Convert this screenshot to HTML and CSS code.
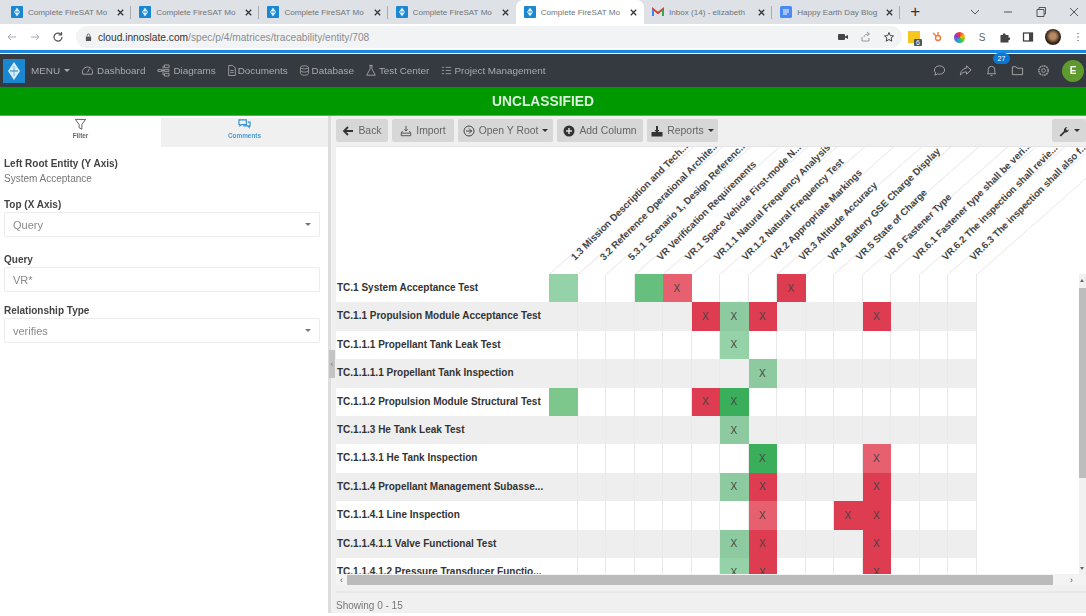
FILE: index.html
```html
<!DOCTYPE html>
<html lang="en">
<head>
  <meta charset="UTF-8" />
  <title>Complete FireSAT Model</title>
  <link rel="stylesheet" href="styles.css">
</head>
<body>

<svg class="defs" width="0" height="0">
  <symbol id="fav" viewBox="0 0 12 12">
    <rect width="12" height="12" rx="1" fill="#1a87d2"/>
    <path d="M6 1.5 9 6 6 10.5 3 6Z" fill="#dff0fb"/>
    <path d="M4 6h4" stroke="#1a87d2"/>
  </symbol>
  <symbol id="close" viewBox="0 0 10 10">
    <path d="M2 2l6 6M8 2l-6 6" stroke="#333" stroke-width="1.4" fill="none"/>
  </symbol>
</svg>

<!-- browser chrome -->
<div class="tabstrip">
  <div class="tab"><svg class="fav"><use href="#fav"/></svg><span>Complete FireSAT Mo</span><svg class="x"><use href="#close"/></svg></div>
  <div class="tab"><svg class="fav"><use href="#fav"/></svg><span>Complete FireSAT Mo</span><svg class="x"><use href="#close"/></svg></div>
  <div class="tab"><svg class="fav"><use href="#fav"/></svg><span>Complete FireSAT Mo</span><svg class="x"><use href="#close"/></svg></div>
  <div class="tab last"><svg class="fav"><use href="#fav"/></svg><span>Complete FireSAT Mo</span><svg class="x"><use href="#close"/></svg></div>
  <div class="tab active"><svg class="fav"><use href="#fav"/></svg><span>Complete FireSAT Mo</span><svg class="x"><use href="#close"/></svg></div>
  <div class="tab"><svg class="fav" viewBox="0 0 12 10"><path d="M1 9V2l5 4 5-4v7" fill="none" stroke="#d8402f" stroke-width="2"/><path d="M1 9V3" stroke="#4285f4" stroke-width="2"/><path d="M11 9V3" stroke="#34a853" stroke-width="2"/></svg><span>Inbox (14) - elizabeth</span><svg class="x"><use href="#close"/></svg></div>
  <div class="tab"><svg class="fav" viewBox="0 0 12 12"><rect width="12" height="12" rx="1.5" fill="#4a8af4"/><path d="M3 4h6M3 6h6M3 8h4" stroke="#fff"/></svg><span>Happy Earth Day Blog</span><svg class="x"><use href="#close"/></svg></div>
  <div class="newtab">+</div>
  <div class="winctl">
    <svg width="12" height="12" viewBox="0 0 12 12"><path d="M2 4l4 4 4-4" fill="none" stroke="#555"/></svg>
    <svg width="12" height="12" viewBox="0 0 12 12"><path d="M2 6h8" stroke="#555"/></svg>
    <svg width="12" height="12" viewBox="0 0 12 12"><path d="M2 3.500h7v7H2zM4 3.500V1.500h6.500V8H9" fill="none" stroke="#555"/></svg>
    <svg width="12" height="12" viewBox="0 0 12 12"><path d="M2 2l8 8M10 2l-8 8" stroke="#555"/></svg>
  </div>
</div>

<div class="addressbar">
  <svg class="chromeicon" viewBox="0 0 12 12"><path d="M10 6H2M5 3 2 6l3 3" fill="none" stroke="#aab"/></svg>
  <svg class="chromeicon" viewBox="0 0 12 12"><path d="M2 6h8M7 3l3 3-3 3" fill="none" stroke="#aab"/></svg>
  <svg class="chromeicon" viewBox="0 0 12 12"><path d="M10 6a4 4 0 1 1-1.200-2.800M9.500 1v3h-3" fill="none" stroke="#555" stroke-width="1.200"/></svg>
  <div class="omnibox">
    <svg class="lock" viewBox="0 0 8 10"><rect x="1" y="4" width="6" height="5" fill="#555"/><path d="M2.500 4V2.500a1.500 1.500 0 0 1 3 0V4" fill="none" stroke="#555"/></svg>
    <span class="url"><b>cloud.innoslate.com</b>/spec/p/4/matrices/traceability/entity/708</span>
    <div class="omni-right">
      <svg viewBox="0 0 12 12"><rect x="1" y="3" width="7" height="6" rx="1" fill="#444"/><path d="M8 5.500 11 4v4L8 6.500Z" fill="#444"/></svg>
      <svg viewBox="0 0 12 12"><path d="M2 6v4h7V7M4 6c0-2 2-3 5-3M7 1l2.500 2L7 5" fill="none" stroke="#999"/></svg>
      <svg viewBox="0 0 12 12"><path d="M6 1.500 7.300 4.600l3.200.3-2.400 2.100.7 3.200L6 8.500l-2.800 1.700.7-3.200L1.500 4.900l3.200-.3Z" fill="none" stroke="#444"/></svg>
    </div>
  </div>
  <div class="extensions">
    <div class="ext-note"><i>6</i></div>
    <svg viewBox="0 0 12 12"><circle cx="7" cy="7" r="2.500" fill="none" stroke="#f07a3c" stroke-width="1.400"/><path d="M5 5 2 2M7 4V1" stroke="#f07a3c" stroke-width="1.400"/></svg>
    <div class="ext-wheel"></div>
    <span class="ext-s">S</span>
    <svg viewBox="0 0 12 12"><path d="M1.500 4h2.500a1.300 1.300 0 1 1 2.500 0h3v2.500a1.300 1.300 0 1 1 0 2.500V11.500H1.500Z" fill="#444"/></svg>
    <svg viewBox="0 0 12 12"><rect x="1.500" y="2" width="9" height="8" fill="none" stroke="#444" stroke-width="1.300"/><rect x="7" y="2" width="3.500" height="8" fill="#444"/></svg>
    <div class="ext-avatar"></div>
    <svg viewBox="0 0 12 12"><path d="M6 2v.8M6 5.600v.8M6 9.200v.8" stroke="#666" stroke-width="1.600"/></svg>
  </div>
</div>

<!-- app nav -->
<nav class="topnav">
  <div class="logo"><svg width="16" height="20" viewBox="0 0 16 20"><path d="M8 1 14 10 8 19 2 10Z" fill="#d9ecf8"/><path d="M4 10h8" stroke="#1b87d0"/><path d="M8 5v10" stroke="#1b87d0" stroke-width=".6"/></svg></div>
  <a class="menu">MENU <i class="caret"></i></a>
  <a class="nav-dash"><svg viewBox="0 0 14 14"><path d="M2 11a5.500 5.500 0 1 1 10 0Z" fill="none" stroke="#aaa"/><path d="M7 9l2-4" stroke="#aaa"/></svg>Dashboard</a>
  <a class="nav-diag"><svg viewBox="0 0 14 14"><path d="M1 6h4v2H1zM8 1h5v3H8zM8 6h5v2H8zM8 10h5v3H8zM5 7h3M6.500 2.500V11.500M6.500 2.500H8M6.500 11.500H8" fill="none" stroke="#aaa" stroke-width=".9"/></svg>Diagrams</a>
  <a class="nav-docs"><svg viewBox="0 0 12 14"><path d="M2 1h5l3 3v9H2Z M4 7h4M4 9.500h4" fill="none" stroke="#aaa"/></svg>Documents</a>
  <a class="nav-data"><svg viewBox="0 0 14 14"><ellipse cx="7" cy="3" rx="5" ry="2" fill="none" stroke="#aaa"/><path d="M2 3v8c0 1 2 2 5 2s5-1 5-2V3M2 7c0 1 2 2 5 2s5-1 5-2" fill="none" stroke="#aaa"/></svg>Database</a>
  <a class="nav-test"><svg viewBox="0 0 14 14"><path d="M5 1h4M6 1v4L2 12.500h10L8 5V1" fill="none" stroke="#aaa"/></svg>Test Center</a>
  <a class="nav-pm"><svg viewBox="0 0 14 14"><path d="M1 3h3M1 7h3M1 11h3M6 3h7M6 7h7M6 11h7" stroke="#aaa"/></svg>Project Management</a>
  <div class="nav-right">
    <svg viewBox="0 0 14 14"><path d="M7 2c3 0 5.500 2 5.500 4.500S10 11 7 11c-.7 0-1.500-.1-2-.3L2 12l.8-2.500C1.900 8.700 1.500 7.600 1.500 6.500 1.500 4 4 2 7 2Z" fill="none" stroke="#aaa"/></svg>
    <svg viewBox="0 0 14 14"><path d="M8 2l5 4.500L8 11V8.500C5 8.500 3 9.500 1.500 12c0-4 2.500-7 6.500-7.500Z" fill="none" stroke="#aaa"/></svg>
    <div class="bell"><svg viewBox="0 0 14 14"><path d="M2.500 10.500h9L10.500 9V6a3.500 3.500 0 0 0-7 0v3ZM6 12.500h2" fill="none" stroke="#aaa"/></svg><span class="badge">27</span></div>
    <svg viewBox="0 0 14 14"><path d="M1.500 3h4l1 1.500h6V11.500h-11Z" fill="none" stroke="#aaa"/></svg>
    <svg viewBox="0 0 14 14"><circle cx="7" cy="7" r="2" fill="none" stroke="#aaa"/><circle cx="7" cy="7" r="5" fill="none" stroke="#aaa" stroke-width="1.400" stroke-dasharray="2 .6"/></svg>
    <div class="avatar">E</div>
  </div>
</nav>

<div class="banner">UNCLASSIFIED</div>

<div class="workspace">
  <!-- left panel -->
  <aside class="sidebar">
    <div class="side-tabs">
      <div class="side-tab on">
        <svg viewBox="0 0 14 14"><path d="M1.500 1.500h11L8.500 7v5l-3-1.500V7Z" fill="none" stroke="#555"/></svg>
        Filter
      </div>
      <div class="side-tab blue">
        <svg viewBox="0 0 14 14"><path d="M1 2h8v5H4L2 8.500V7H1ZM5.500 8.500H10.500L12 10V8.500h1V4.500H10.500" fill="none" stroke="#2e8fd6" stroke-width="1.200"/></svg>
        Comments
      </div>
    </div>
    <form class="filter-form">
      <label>Left Root Entity (Y Axis)</label>
      <p>System Acceptance</p>
      <label class="top-label">Top (X Axis)</label>
      <div class="field">Query<i class="caret"></i></div>
      <label class="query-label">Query</label>
      <div class="field">VR*</div>
      <label class="rel-label">Relationship Type</label>
      <div class="field">verifies<i class="caret"></i></div>
    </form>
  </aside>

  <div class="resizer"><span>‹</span></div>

  <!-- matrix -->
  <main class="content">
    <div class="toolbar">
      <button class="w-back"><svg viewBox="0 0 12 12"><path d="M11 6H2M6 2 2 6l4 4" fill="none" stroke="#333" stroke-width="1.800"/></svg>Back</button>
      <button class="w-import"><svg viewBox="0 0 14 14"><path d="M7 1v6M5 5l2 2 2-2M3 7 1.500 9.500v3h11v-3L11 7M1.500 9.500h11" fill="none" stroke="#444"/></svg>Import</button>
      <button class="w-open"><svg viewBox="0 0 12 12"><circle cx="6" cy="6" r="5" fill="none" stroke="#444"/><path d="M3 6h6M6 3.500 8.500 6 6 8.500" fill="none" stroke="#444"/></svg>Open Y Root <i class="caret"></i></button>
      <button class="w-add"><svg viewBox="0 0 12 12"><circle cx="6" cy="6" r="5.500" fill="#333"/><path d="M3 6h6M6 3v6" stroke="#ddd" stroke-width="1.500"/></svg>Add Column</button>
      <button class="w-reports"><svg viewBox="0 0 12 12"><path d="M6 1v5M1.500 8h9v2.500h-9Z" stroke="#333" stroke-width="2" fill="#333"/><path d="M3.500 5 6 8l2.500-3Z" fill="#333"/></svg>Reports <i class="caret"></i></button>
      <button class="w-wrench"><svg viewBox="0 0 12 12"><path d="M1.500 10.500 6 6c-.5-2 1-4 3.500-4L8 3.500 8.500 5l1.500.5L11 4c0 2.500-2 4-4 3.500l-4 4Z" fill="#333"/></svg><i class="caret"></i></button>
    </div>

    <div class="matrix">
      <div class="row head">
        <div></div>
        <div class="col"><span>1.3 Mission Description and Tech...</span></div>
        <div class="col"><span>3.2 Reference Operational Archite...</span></div>
        <div class="col"><span>5.3.1 Scenario 1, Design Referenc...</span></div>
        <div class="col"><span>VR Verification Requirements</span></div>
        <div class="col"><span>VR.1 Space Vehicle First-mode N...</span></div>
        <div class="col"><span>VR.1.1 Natural Frequency Analysis</span></div>
        <div class="col"><span>VR.1.2 Natural Frequency Test</span></div>
        <div class="col"><span>VR.2 Appropriate Markings</span></div>
        <div class="col"><span>VR.3 Altitude Accuracy</span></div>
        <div class="col"><span>VR.4 Battery GSE Charge Display</span></div>
        <div class="col"><span>VR.5 State of Charge</span></div>
        <div class="col"><span>VR.6 Fastener Type</span></div>
        <div class="col"><span>VR.6.1 Fastener type shall be veri...</span></div>
        <div class="col"><span>VR.6.2 The inspection shall revie...</span></div>
        <div class="col"><span>VR.6.3 The inspection shall also f...</span></div>
      </div>

      <div class="row">
        <div class="name">TC.1 System Acceptance Test</div>
        <div class="g1"></div><div></div><div></div><div class="g2"></div><div class="r1">X</div><div></div><div></div><div></div><div class="r2">X</div><div></div><div></div><div></div><div></div><div></div><div></div>
      </div>
      <div class="row">
        <div class="name">TC.1.1 Propulsion Module Acceptance Test</div>
        <div></div><div></div><div></div><div></div><div></div><div class="r2">X</div><div class="g1">X</div><div class="r2">X</div><div></div><div></div><div></div><div class="r2">X</div><div></div><div></div><div></div>
      </div>
      <div class="row">
        <div class="name">TC.1.1.1 Propellant Tank Leak Test</div>
        <div></div><div></div><div></div><div></div><div></div><div></div><div class="g1">X</div><div></div><div></div><div></div><div></div><div></div><div></div><div></div><div></div>
      </div>
      <div class="row">
        <div class="name">TC.1.1.1.1 Propellant Tank Inspection</div>
        <div></div><div></div><div></div><div></div><div></div><div></div><div></div><div class="g1">X</div><div></div><div></div><div></div><div></div><div></div><div></div><div></div>
      </div>
      <div class="row">
        <div class="name">TC.1.1.2 Propulsion Module Structural Test</div>
        <div class="g1b"></div><div></div><div></div><div></div><div></div><div class="r2">X</div><div class="g3">X</div><div></div><div></div><div></div><div></div><div></div><div></div><div></div><div></div>
      </div>
      <div class="row">
        <div class="name">TC.1.1.3 He Tank Leak Test</div>
        <div></div><div></div><div></div><div></div><div></div><div></div><div class="g1">X</div><div></div><div></div><div></div><div></div><div></div><div></div><div></div><div></div>
      </div>
      <div class="row">
        <div class="name">TC.1.1.3.1 He Tank Inspection</div>
        <div></div><div></div><div></div><div></div><div></div><div></div><div></div><div class="g3">X</div><div></div><div></div><div></div><div class="r1">X</div><div></div><div></div><div></div>
      </div>
      <div class="row">
        <div class="name">TC.1.1.4 Propellant Management Subasse...</div>
        <div></div><div></div><div></div><div></div><div></div><div></div><div class="g1">X</div><div class="r2">X</div><div></div><div></div><div></div><div class="r2">X</div><div></div><div></div><div></div>
      </div>
      <div class="row">
        <div class="name">TC.1.1.4.1 Line Inspection</div>
        <div></div><div></div><div></div><div></div><div></div><div></div><div></div><div class="r1">X</div><div></div><div></div><div class="r2">X</div><div class="r2">X</div><div></div><div></div><div></div>
      </div>
      <div class="row">
        <div class="name">TC.1.1.4.1.1 Valve Functional Test</div>
        <div></div><div></div><div></div><div></div><div></div><div></div><div class="g1">X</div><div class="r2">X</div><div></div><div></div><div></div><div class="r2">X</div><div></div><div></div><div></div>
      </div>
      <div class="row">
        <div class="name">TC.1.1.4.1.2 Pressure Transducer Functio...</div>
        <div></div><div></div><div></div><div></div><div></div><div></div><div class="g1">X</div><div class="r2">X</div><div></div><div></div><div></div><div class="r2">X</div><div></div><div></div><div></div>
      </div>

      <div class="vscroll"><i></i></div>
    </div>

    <div class="hscroll"><em>‹</em><i></i><em>›</em></div>
    <div class="footer">Showing 0 - 15</div>
  </main>
</div>

</body>
</html>
```

FILE: styles.css
```css
html, body { margin: 0; height: 100%; overflow: hidden; }
body {
  font-family: "Liberation Sans", Arial, sans-serif;
  background: #fff;
  color: #333;
  filter: blur(0.6px);
}
.defs { position: absolute; }
.caret {
  display: inline-block;
  border-top: 3px solid currentColor;
  border-left: 3px solid transparent;
  border-right: 3px solid transparent;
  vertical-align: middle;
}

/* browser chrome */
.tabstrip {
  height: 24px;
  background: #dee1e6;
  display: flex;
  align-items: center;
  padding-left: 3px;
  font-size: 8.1px;
  color: #70747a;
}
.tab {
  width: 128.2px;
  height: 24px;
  box-sizing: border-box;
  padding: 0 6px 0 8px;
  display: flex;
  align-items: center;
  position: relative;
  flex: none;
}
.tab::after {
  content: "";
  position: absolute;
  right: 0;
  top: 6px;
  height: 13px;
  border-right: 1px solid #a8abb0;
}
.tab.last::after, .tab.active::after { display: none; }
.tab.active { background: #fff; border-radius: 7px 7px 0 0; }
.tab span { flex: 1; overflow: hidden; white-space: nowrap; margin-left: 5px; }
.fav { width: 12px; height: 12px; flex: none; }
.x { width: 9px; height: 9px; flex: none; margin-left: 4px; }
.newtab { margin-left: 10px; font-size: 17px; color: #333; line-height: 24px; }
.winctl { margin-left: auto; display: flex; gap: 21px; padding-right: 6px; }

.addressbar {
  height: 26px;
  background: #fff;
  display: flex;
  align-items: center;
  padding-left: 6px;
  border-bottom: 3px solid #1a87e0;
  box-sizing: content-box;
}
.chromeicon { width: 12px; height: 12px; margin-right: 11px; flex: none; }
.omnibox {
  margin-left: 1px;
  width: 826px;
  height: 22px;
  background: #f1f3f4;
  border-radius: 11px;
  display: flex;
  align-items: center;
  padding-left: 9px;
  box-sizing: border-box;
  font-size: 10.2px;
}
.lock { width: 7px; height: 9px; margin-right: 6px; }
.url { color: #8a8d91; }
.url b { font-weight: normal; color: #333; }
.omni-right { margin-left: auto; display: flex; gap: 11px; padding-right: 7px; }
.omni-right svg { width: 12px; height: 12px; }
.extensions { display: flex; align-items: center; gap: 11px; margin-left: 6px; }
.extensions > svg { width: 12px; height: 12px; }
.ext-note { width: 12px; height: 12px; background: #f6c81e; position: relative; }
.ext-note i {
  position: absolute;
  right: -2px;
  bottom: -3px;
  background: #555;
  color: #fff;
  font: 7px "Liberation Sans", sans-serif;
  padding: 0 2px;
  border-radius: 1px;
}
.ext-wheel {
  width: 11px;
  height: 11px;
  border-radius: 50%;
  background: conic-gradient(#e33, #fb0, #3c4, #29e, #93c, #e33);
}
.ext-s { width: 12px; font-size: 10px; text-align: center; color: #666; }
.ext-avatar {
  width: 16px;
  height: 16px;
  border-radius: 50%;
  background: radial-gradient(circle at 50% 45%, #b78a62 25%, #33241a 60%);
}

/* app nav */
.topnav {
  height: 33px;
  margin-top: 1px;
  background: #343a40;
  display: flex;
  align-items: center;
  font-size: 9.9px;
  color: #a8abae;
  padding-left: 3px;
  white-space: nowrap;
}
.logo {
  width: 22px;
  height: 24px;
  background: #1b87d0;
  display: flex;
  align-items: center;
  justify-content: center;
  flex: none;
}
.topnav a { display: flex; align-items: center; gap: 3px; flex: none; }
.topnav a svg { width: 13px; height: 13px; }
.menu { margin-left: 6px; gap: 4px !important; }
.nav-dash { margin-left: 11px; }
.nav-diag { margin-left: 12px; }
.nav-docs { margin-left: 11px; gap: 1px !important; }
.nav-docs svg { width: 10px !important; }
.nav-data { margin-left: 11px; gap: 2px !important; }
.nav-data svg { width: 11px !important; }
.nav-test { margin-left: 11px; gap: 2px !important; }
.nav-test svg { width: 12px !important; }
.nav-pm { margin-left: 12px; gap: 2px !important; }
.nav-pm svg { width: 11px !important; }
.nav-right { margin-left: auto; display: flex; align-items: center; gap: 13px; padding-right: 2px; }
.nav-right > svg, .bell svg { width: 13px; height: 13px; display: block; }
.bell { position: relative; }
.badge {
  position: absolute;
  left: 8px;
  top: -11px;
  background: #0b76d3;
  color: #fff;
  font-size: 7px;
  line-height: 11px;
  padding: 0 4.5px;
  border-radius: 6px;
}
.avatar {
  width: 22px;
  height: 22px;
  margin-left: -1px;
  border-radius: 50%;
  background: #5e9a2e;
  color: #fff;
  font-size: 10px;
  font-weight: bold;
  display: flex;
  align-items: center;
  justify-content: center;
}

.banner {
  height: 28px;
  background: #009900;
  color: #dcefdc;
  font-size: 13.8px;
  font-weight: bold;
  display: flex;
  align-items: center;
  justify-content: center;
}

.workspace { display: flex; height: 497px; border-top: 1px solid #58b058; }

/* left panel */
.sidebar { width: 328px; flex: none; background: #fff; border-right: 3px solid #dcdcdc; box-sizing: content-box; }
.side-tabs { display: flex; height: 29px; margin-top: 2px; }
.side-tab {
  width: 161px;
  display: flex;
  flex-direction: column;
  align-items: center;
  font-size: 6.4px;
  color: #666;
  font-weight: bold;
}
.side-tab svg { width: 13px; height: 13px; margin-bottom: 1px; }
.side-tab.blue { flex: 1; background: #f0f0f0; color: #4b9bd8; }
.filter-form { padding: 11px 8px 0 4px; font-size: 10px; }
.filter-form label { display: block; font-weight: bold; color: #444; line-height: 12px; }
.filter-form p { margin: 3px 0 0; color: #777; line-height: 12px; }
.field {
  height: 25px;
  margin-top: 1px;
  border: 1px solid #ececec;
  border-radius: 2px;
  box-sizing: border-box;
  padding: 0 8px;
  display: flex;
  align-items: center;
  justify-content: space-between;
  font-size: 11px;
  color: #8a8a8a;
}
.field .caret { color: #777; }
.top-label { margin-top: 14px; }
.query-label { margin-top: 17px; }
.rel-label { margin-top: 13px; }

.resizer { width: 5px; flex: none; background: #f0f0f0; position: relative; }
.resizer span {
  position: absolute;
  left: -2px;
  top: 234px;
  width: 6px;
  height: 28px;
  background: #c4c4c4;
  font-size: 9px;
  line-height: 28px;
  color: #777;
  text-align: center;
}

/* matrix */
.content { flex: 1; min-width: 0; background: #f0f0f0; display: flex; flex-direction: column; }
.toolbar { height: 30px; display: flex; align-items: center; gap: 4px; flex: none; padding-bottom: 1px; box-sizing: border-box; }
.toolbar button {
  height: 23px;
  border: 0;
  border-radius: 2px;
  background: #d7d7d7;
  color: #666;
  font: 10.4px "Liberation Sans", sans-serif;
  display: flex;
  align-items: center;
  justify-content: center;
  gap: 4px;
  padding: 0;
  flex: none;
}
.toolbar button svg { width: 12px; height: 12px; }
.toolbar .caret { color: #333; }
.w-back { width: 52px; }
.w-import { width: 62px; }
.w-open { width: 95px; }
.w-add { width: 86px; }
.w-reports { width: 71px; }
.w-wrench { width: 34px; margin-left: auto; }

.matrix {
  height: 427px;
  background: #fff;
  overflow: hidden;
  position: relative;
  flex: none;
  border-top: 1px solid #e4e4e4;
}
.row {
  display: grid;
  grid-template-columns: 213px repeat(15, 28.53px);
  width: 641px;
  height: 28.4px;
  font-size: 10px;
}
.row:nth-child(odd) { background: #eeeeee; }
.row > div { border-right: 1px solid #e9e9e9; box-sizing: border-box; }
.row > div:first-child { border-right: 0; }
.row > div:not(.name) {
  display: flex;
  align-items: center;
  justify-content: center;
  font-size: 10px;
  color: #444;
}
.name {
  font-weight: bold;
  color: #333;
  line-height: 28.4px;
  padding-left: 1px;
  white-space: nowrap;
  overflow: hidden;
}
.row .g1 { background: rgba(45, 165, 80, 0.5); border-color: transparent; }
.row .g1b { background: #7dc78d; border-color: transparent; }
.row .g2 { background: #66bf7c; border-color: transparent; }
.row .g3 { background: #3bae5c; border-color: transparent; }
.row .r1 { background: #e6606f; border-color: transparent; }
.row .r2 { background: #de3c50; border-color: transparent; }

.row.head { height: 127px; background: #fff; }
.row.head > div { border: 0; }
.row > .col { position: relative; display: block !important; }
.col::before, .col:last-child::after {
  content: "";
  position: absolute;
  left: 0;
  bottom: 0;
  height: 127px;
  border-left: 1px solid #e2e2e2;
  transform-origin: left bottom;
  transform: skewX(-48.6deg);
}
.col:last-child::after { left: 100%; }
.col span {
  position: absolute;
  left: 28px;
  bottom: 11px;
  width: 0;
  height: 12px;
  white-space: nowrap;
  font-size: 9.7px;
  line-height: 12px;
  font-weight: bold;
  color: #444;
  transform-origin: left bottom;
  transform: rotate(-45deg);
}

.vscroll {
  position: absolute;
  right: 0;
  top: 127px;
  bottom: 0;
  width: 7px;
  background: #f1f1f1;
}
.vscroll::before, .vscroll::after {
  content: "";
  position: absolute;
  left: 1px;
  border-left: 2.5px solid transparent;
  border-right: 2.5px solid transparent;
}
.vscroll::before { top: 5px; border-bottom: 3px solid #666; }
.vscroll::after { bottom: 4px; border-top: 3px solid #666; }
.vscroll i { display: block; margin-top: 14px; height: 190px; background: #bdbdbd; }

.hscroll {
  height: 11px;
  flex: none;
  display: flex;
  align-items: center;
  background: #f3f3f3;
  font-size: 9px;
  color: #555;
}
.hscroll em { font-style: normal; width: 11px; text-align: center; }
.hscroll i { display: block; width: 706px; height: 10px; background: #bbbbbb; }
.hscroll em:last-child { margin-left: 13px; }
.footer {
  margin-top: 6px;
  border-top: 2px solid #e8e8e8;
  padding-top: 7px;
  font-size: 10px;
  color: #777;
}
```
